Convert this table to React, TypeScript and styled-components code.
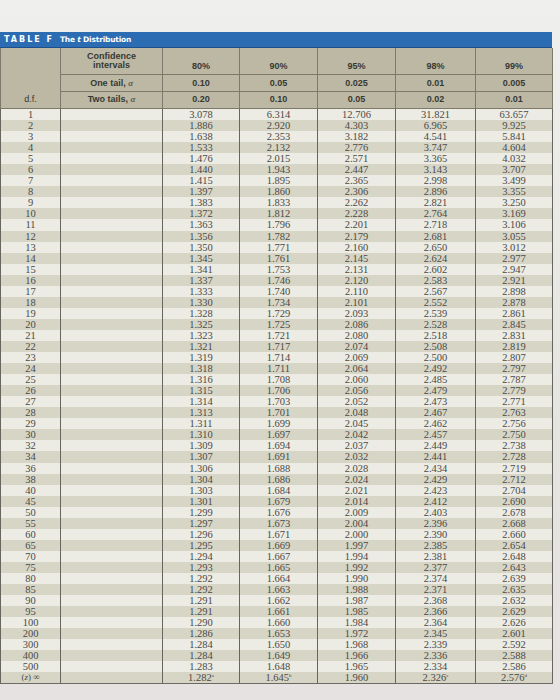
import * as React from "react"
import styled, { createGlobalStyle } from "styled-components"

const GlobalStyle = createGlobalStyle`
  html, body {
    margin: 0;
    padding: 0;
    background: #e6e6e2;
  }
`

const Page = styled.div`
  width: 560px;
  height: 700px;
  padding-top: 32px;
  box-sizing: border-box;
  background: linear-gradient(#efefed, #e4e4e0 60%, #e6e2e2);
  overflow: hidden;
`

const Sheet = styled.div`
  width: 552px;
`

const TitleBar = styled.div`
  height: 15px;
  background: #2b6cb3;
  border-bottom: 1px solid #1d4f8a;
  display: flex;
  align-items: center;
  gap: 6px;
  padding-left: 4px;
  color: #fff;
  font-family: "DejaVu Sans", "Liberation Sans", sans-serif;
  font-weight: bold;
`

const TableTag = styled.span`
  font-size: 8px;
  letter-spacing: 2px;
`

const TitleText = styled.span`
  font-size: 7.5px;
  letter-spacing: -0.2px;
`

const Table = styled.table`
  width: 552px;
  border-collapse: collapse;
  table-layout: fixed;
  border-left: 1.5px solid #6a6a62;
  border-right: 1.5px solid #6a6a62;
  border-bottom: 1.5px solid #6a6a62;
`

const Head = styled.th<{ $h: number; $align?: string }>`
  background: #bcb8a4;
  height: ${p => p.$h}px;
  padding: 0 2px;
  border: 1px solid #7d7a6b;
  border-top: none;
  font-family: "Liberation Sans", Arial, sans-serif;
  font-weight: bold;
  font-size: 9px;
  line-height: 9px;
  color: #383833;
  text-align: center;
  vertical-align: ${p => p.$align || "middle"};
`

const DfHead = styled(Head)`
  padding-bottom: 4px;
  font-weight: normal;
  font-size: 9px;
`

const Alpha = styled.span`
  font-family: "Liberation Serif", serif;
  font-style: italic;
  font-weight: normal;
`

const Row = styled.tr<{ $even: boolean }>`
  background: ${p => (p.$even ? "#d7d5c5" : "#ecebe4")};
`

const Cell = styled.td`
  height: 11.05px;
  padding: 0;
  border-left: 1.5px solid #66665e;
  border-right: 1.5px solid #66665e;
  font-family: "Liberation Serif", "Times New Roman", serif;
  font-size: 10.5px;
  line-height: 11px;
  color: #4a4a46;
  text-align: center;
  white-space: nowrap;
`

const Sup = styled.sup`
  font-size: 5px;
  line-height: 0;
  vertical-align: 4px;
`

const cols = [
  { conf: "80%", one: "0.10", two: "0.20" },
  { conf: "90%", one: "0.05", two: "0.10" },
  { conf: "95%", one: "0.025", two: "0.05" },
  { conf: "98%", one: "0.01", two: "0.02" },
  { conf: "99%", one: "0.005", two: "0.01" }
]

const widths = [60, 102, 77, 78, 78, 80, 77]

const data: [string, string[]][] = [
  ["1", ["3.078", "6.314", "12.706", "31.821", "63.657"]],
  ["2", ["1.886", "2.920", "4.303", "6.965", "9.925"]],
  ["3", ["1.638", "2.353", "3.182", "4.541", "5.841"]],
  ["4", ["1.533", "2.132", "2.776", "3.747", "4.604"]],
  ["5", ["1.476", "2.015", "2.571", "3.365", "4.032"]],
  ["6", ["1.440", "1.943", "2.447", "3.143", "3.707"]],
  ["7", ["1.415", "1.895", "2.365", "2.998", "3.499"]],
  ["8", ["1.397", "1.860", "2.306", "2.896", "3.355"]],
  ["9", ["1.383", "1.833", "2.262", "2.821", "3.250"]],
  ["10", ["1.372", "1.812", "2.228", "2.764", "3.169"]],
  ["11", ["1.363", "1.796", "2.201", "2.718", "3.106"]],
  ["12", ["1.356", "1.782", "2.179", "2.681", "3.055"]],
  ["13", ["1.350", "1.771", "2.160", "2.650", "3.012"]],
  ["14", ["1.345", "1.761", "2.145", "2.624", "2.977"]],
  ["15", ["1.341", "1.753", "2.131", "2.602", "2.947"]],
  ["16", ["1.337", "1.746", "2.120", "2.583", "2.921"]],
  ["17", ["1.333", "1.740", "2.110", "2.567", "2.898"]],
  ["18", ["1.330", "1.734", "2.101", "2.552", "2.878"]],
  ["19", ["1.328", "1.729", "2.093", "2.539", "2.861"]],
  ["20", ["1.325", "1.725", "2.086", "2.528", "2.845"]],
  ["21", ["1.323", "1.721", "2.080", "2.518", "2.831"]],
  ["22", ["1.321", "1.717", "2.074", "2.508", "2.819"]],
  ["23", ["1.319", "1.714", "2.069", "2.500", "2.807"]],
  ["24", ["1.318", "1.711", "2.064", "2.492", "2.797"]],
  ["25", ["1.316", "1.708", "2.060", "2.485", "2.787"]],
  ["26", ["1.315", "1.706", "2.056", "2.479", "2.779"]],
  ["27", ["1.314", "1.703", "2.052", "2.473", "2.771"]],
  ["28", ["1.313", "1.701", "2.048", "2.467", "2.763"]],
  ["29", ["1.311", "1.699", "2.045", "2.462", "2.756"]],
  ["30", ["1.310", "1.697", "2.042", "2.457", "2.750"]],
  ["32", ["1.309", "1.694", "2.037", "2.449", "2.738"]],
  ["34", ["1.307", "1.691", "2.032", "2.441", "2.728"]],
  ["36", ["1.306", "1.688", "2.028", "2.434", "2.719"]],
  ["38", ["1.304", "1.686", "2.024", "2.429", "2.712"]],
  ["40", ["1.303", "1.684", "2.021", "2.423", "2.704"]],
  ["45", ["1.301", "1.679", "2.014", "2.412", "2.690"]],
  ["50", ["1.299", "1.676", "2.009", "2.403", "2.678"]],
  ["55", ["1.297", "1.673", "2.004", "2.396", "2.668"]],
  ["60", ["1.296", "1.671", "2.000", "2.390", "2.660"]],
  ["65", ["1.295", "1.669", "1.997", "2.385", "2.654"]],
  ["70", ["1.294", "1.667", "1.994", "2.381", "2.648"]],
  ["75", ["1.293", "1.665", "1.992", "2.377", "2.643"]],
  ["80", ["1.292", "1.664", "1.990", "2.374", "2.639"]],
  ["85", ["1.292", "1.663", "1.988", "2.371", "2.635"]],
  ["90", ["1.291", "1.662", "1.987", "2.368", "2.632"]],
  ["95", ["1.291", "1.661", "1.985", "2.366", "2.629"]],
  ["100", ["1.290", "1.660", "1.984", "2.364", "2.626"]],
  ["200", ["1.286", "1.653", "1.972", "2.345", "2.601"]],
  ["300", ["1.284", "1.650", "1.968", "2.339", "2.592"]],
  ["400", ["1.284", "1.649", "1.966", "2.336", "2.588"]],
  ["500", ["1.283", "1.648", "1.965", "2.334", "2.586"]]
]

const zRow: [string, string][] = [
  ["1.282", "a"],
  ["1.645", "b"],
  ["1.960", ""],
  ["2.326", "c"],
  ["2.576", "d"]
]

export default function App() {
  return (
    <Page>
      <GlobalStyle />
      <Sheet>
        <TitleBar>
          <TableTag>TABLE F</TableTag>
          <TitleText>
            The <i>t</i> Distribution
          </TitleText>
        </TitleBar>
        <Table>
          <colgroup>
            {widths.map((w, i) => (
              <col key={i} style={{ width: w }} />
            ))}
          </colgroup>
          <thead>
            <tr>
              <DfHead rowSpan={3} $h={56} $align="bottom">
                d.f.
              </DfHead>
              <Head $h={23}>
                Confidence
                <br />
                intervals
              </Head>
              {cols.map(c => (
                <Head key={c.conf} $h={23} $align="bottom" style={{ paddingBottom: 3 }}>
                  {c.conf}
                </Head>
              ))}
            </tr>
            <tr>
              <Head $h={15}>
                One tail, <Alpha>α</Alpha>
              </Head>
              {cols.map(c => (
                <Head key={c.conf} $h={15}>
                  {c.one}
                </Head>
              ))}
            </tr>
            <tr>
              <Head $h={16}>
                Two tails, <Alpha>α</Alpha>
              </Head>
              {cols.map(c => (
                <Head key={c.conf} $h={16}>
                  {c.two}
                </Head>
              ))}
            </tr>
          </thead>
          <tbody>
            {data.map(([df, vals], i) => (
              <Row key={df} $even={i % 2 === 1}>
                <Cell>{df}</Cell>
                <Cell />
                {vals.map((v, j) => (
                  <Cell key={j}>{v}</Cell>
                ))}
              </Row>
            ))}
            <Row $even={data.length % 2 === 1}>
              <Cell style={{ fontSize: 9 }}>
                (<i>z</i>) ∞
              </Cell>
              <Cell />
              {zRow.map(([v, s], j) => (
                <Cell key={j}>
                  {v}
                  {s && <Sup>{s}</Sup>}
                </Cell>
              ))}
            </Row>
          </tbody>
        </Table>
      </Sheet>
    </Page>
  )
}
